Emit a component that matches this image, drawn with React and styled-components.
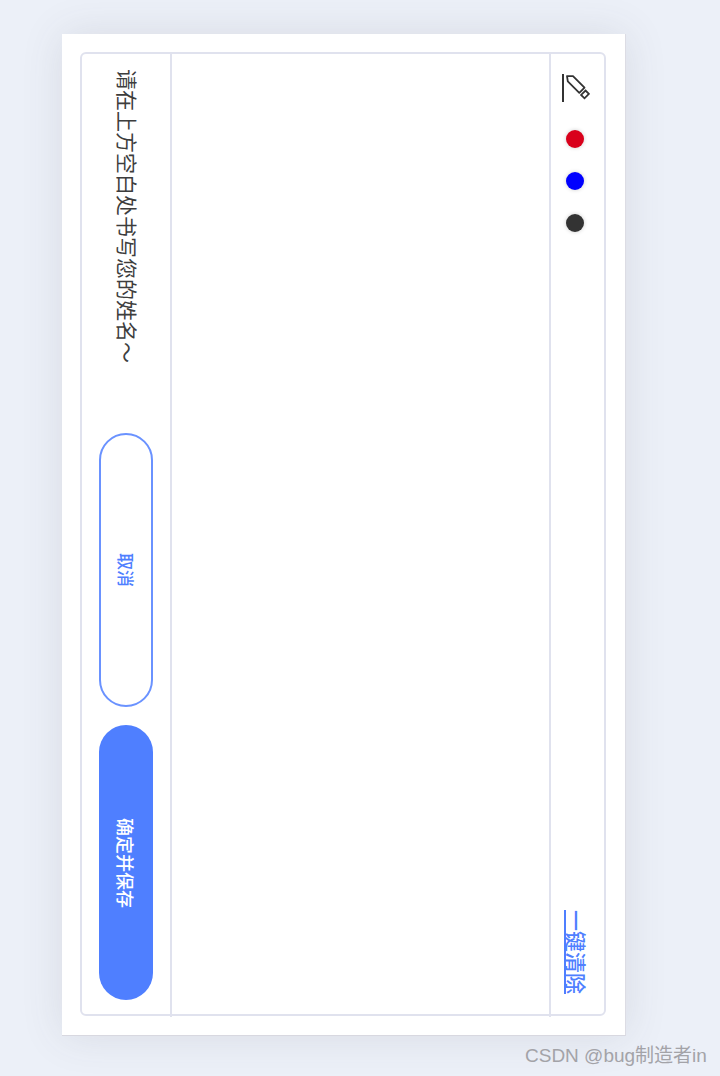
import React from 'react';
import styled, { createGlobalStyle } from 'styled-components';

const GlobalStyle = createGlobalStyle`
    html, body {
        margin: 0;
        padding: 0;
        background: #ecf0f8;
    }
    body {
        font-family: "Liberation Sans", "Noto Sans CJK SC", sans-serif;
    }
`;

const COLORS = ['#d9001b', '#0000ff', '#333333'];

const PenIcon = () => (
    <svg width="30" height="30" viewBox="0 0 30 30" fill="none" stroke="#333" strokeWidth="1.8">
        <path d="M3 1v28" strokeWidth="2" />
        <path d="M7 3.2h6l11.5 11.5-5.2 5.2L7.8 8.4z" strokeLinejoin="round" />
        <path d="M25.5 17.5l3.4 3.4-4.4 4.4-3.4-3.4z" />
    </svg>
);

export default function App() {
    return (
        <Root>
            <GlobalStyle />
            <Card>
                <Panel>
                    <LeftColumn>
                        <Hint>请在上方空白处书写您的姓名～</Hint>
                        <Buttons>
                            <OutlineButton>取消</OutlineButton>
                            <PrimaryButton>确定并保存</PrimaryButton>
                        </Buttons>
                    </LeftColumn>
                    <Canvas />
                    <RightColumn>
                        <Tools>
                            <PenSlot>
                                <PenIcon />
                            </PenSlot>
                            {COLORS.map(color => (
                                <ColorDot key={color} $color={color} />
                            ))}
                        </Tools>
                        <ClearLink>一键清除</ClearLink>
                    </RightColumn>
                </Panel>
            </Card>
            <Watermark>CSDN @bug制造者in</Watermark>
        </Root>
    );
}

const Root = styled.div`
    position: relative;
    width: 720px;
    height: 1076px;
    padding: 34px 0 0 62px;
    box-sizing: border-box;
    overflow: hidden;
`;

const Card = styled.div`
    width: 564px;
    height: 1002px;
    padding: 18px;
    box-sizing: border-box;
    background: #fff;
    border-right: 1px solid #dcdce4;
    border-bottom: 1px solid #d8d8e0;
    box-shadow: 0 0 40px rgba(70, 70, 80, 0.12);
`;

const Panel = styled.div`
    display: flex;
    width: 526px;
    height: 964px;
    box-sizing: border-box;
    border: 2px solid #e0e2ee;
    border-radius: 6px;
`;

const LeftColumn = styled.div`
    display: flex;
    flex-direction: column;
    align-items: center;
    width: 90px;
    margin-bottom: -3px;
    box-sizing: border-box;
    padding: 15px 0 17px;
    border-right: 2px solid #e0e2ee;
`;

const SideText = styled.div`
    writing-mode: vertical-rl;
    text-orientation: sideways;
    white-space: nowrap;
`;

const Hint = styled(SideText)`
    flex: 1;
    font-size: 21px;
    line-height: 21px;
    color: #3d3d3d;
`;

const Buttons = styled.div`
    display: flex;
    flex-direction: column;
    gap: 18px;
`;

const OutlineButton = styled(SideText)`
    display: flex;
    align-items: center;
    justify-content: center;
    width: 54px;
    height: 274px;
    box-sizing: border-box;
    border: 2px solid #6a92ff;
    border-radius: 27px;
    font-size: 17px;
    font-weight: 500;
    color: #4f7fff;
`;

const PrimaryButton = styled(SideText)`
    display: flex;
    align-items: center;
    justify-content: center;
    width: 54px;
    height: 275px;
    border-radius: 27px;
    background: #4f7fff;
    font-size: 18px;
    font-weight: 500;
    color: #fff;
`;

const Canvas = styled.div`
    flex: 1;
`;

const RightColumn = styled.div`
    display: flex;
    flex-direction: column;
    align-items: center;
    justify-content: space-between;
    width: 55px;
    margin-bottom: -3px;
    box-sizing: border-box;
    padding: 19px 5px 23px 0;
    border-left: 2px solid #e0e2ee;
`;

const Tools = styled.div`
    display: flex;
    flex-direction: column;
    align-items: center;
    gap: 24px;
`;

const PenSlot = styled.div`
    display: flex;
    width: 30px;
    height: 30px;
    margin-bottom: 3px;
`;

const ColorDot = styled.div`
    width: 18px;
    height: 18px;
    border-radius: 50%;
    background: ${props => props.$color};
    box-shadow: 0 0 4px rgba(0, 0, 0, 0.2);
`;

const ClearLink = styled(SideText)`
    font-size: 21px;
    font-weight: 500;
    line-height: 24px;
    color: #4f7fff;
    text-decoration: underline;
`;

const Watermark = styled.div`
    position: absolute;
    left: 525px;
    top: 1043px;
    font-size: 19px;
    line-height: 26px;
    color: #a3a3a8;
    white-space: nowrap;
`;
